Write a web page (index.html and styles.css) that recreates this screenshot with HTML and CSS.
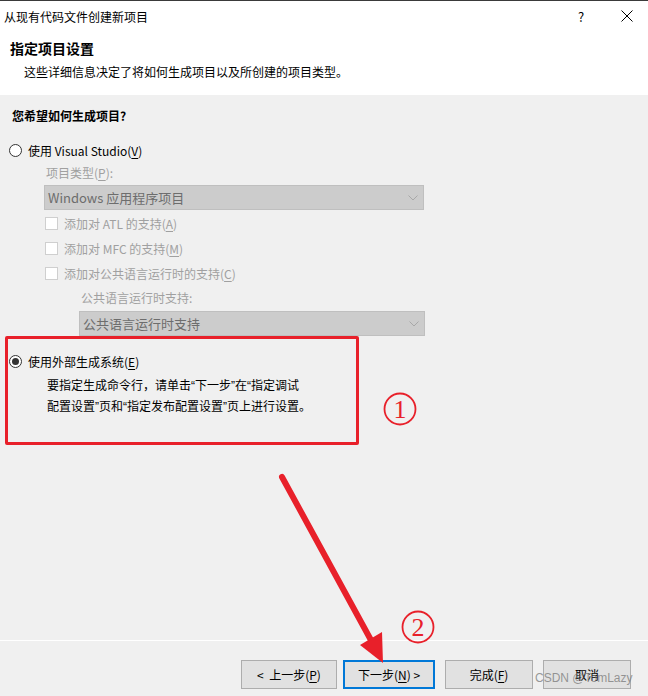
FILE: index.html
```html
<!DOCTYPE html>
<html lang="zh-CN">
<head>
  <meta charset="UTF-8">
  <title>从现有代码文件创建新项目</title>
  <link rel="stylesheet" href="styles.css">
</head>
<body>
  <div class="dialog">
    <div class="titlebar">
      <div class="title">从现有代码文件创建新项目</div>
      <div class="title-btn help">?</div>
      <div class="title-btn close">
        <svg width="12" height="12" viewBox="0 0 12 12"><path d="M0.5 0.5 L11.5 11.5 M11.5 0.5 L0.5 11.5" stroke="#000" stroke-width="1"/></svg>
      </div>
    </div>

    <div class="header">
      <div class="heading">指定项目设置</div>
      <div class="subtitle">这些详细信息决定了将如何生成项目以及所创建的项目类型。</div>
    </div>

    <div class="content">
      <div class="question">您希望如何生成项目?</div>

      <div class="radio-row">
        <span class="radio"></span>
        <span>使用 Visual Studio(<u>V</u>)</span>
      </div>
      <div class="vs-options">
        <div class="field-label">项目类型(<u>P</u>):</div>
        <div class="combo">
          <span>Windows 应用程序项目</span>
          <svg width="10" height="6" viewBox="0 0 10 6"><path d="M0.5 0.5 L5 5 L9.5 0.5" fill="none" stroke="#a8a8a8"/></svg>
        </div>
        <div class="check-row first"><span class="check"></span><span>添加对 ATL 的支持(<u>A</u>)</span></div>
        <div class="check-row"><span class="check"></span><span>添加对 MFC 的支持(<u>M</u>)</span></div>
        <div class="check-row"><span class="check"></span><span>添加对公共语言运行时的支持(<u>C</u>)</span></div>
        <div class="clr">
          <div class="field-label">公共语言运行时支持:</div>
          <div class="combo">
            <span>公共语言运行时支持</span>
            <svg width="10" height="6" viewBox="0 0 10 6"><path d="M0.5 0.5 L5 5 L9.5 0.5" fill="none" stroke="#a8a8a8"/></svg>
          </div>
        </div>
      </div>

      <div class="external">
        <div class="radio-row">
          <span class="radio checked"></span>
          <span>使用外部生成系统(<u>E</u>)</span>
        </div>
        <div class="desc">要指定生成命令行，请单击“下一步”在“指定调试</div>
        <div class="desc">配置设置”页和“指定发布配置设置”页上进行设置。</div>
      </div>
    </div>

    <div class="footer">
      <button class="btn">&lt;&nbsp; 上一步(<u>P</u>)</button>
      <button class="btn default">下一步(<u>N</u>) &gt;</button>
      <button class="btn">完成(<u>F</u>)</button>
      <button class="btn">取消</button>
    </div>

    <!-- annotations drawn over the screenshot -->
    <svg class="mark mark-1" width="36" height="36" viewBox="0 0 36 36">
      <circle cx="18" cy="18" r="15.5" fill="none" stroke="#e8202a" stroke-width="1.8"/>
      <text x="18" y="27" text-anchor="middle" class="mark-num">1</text>
    </svg>
    <svg class="mark mark-2" width="36" height="36" viewBox="0 0 36 36">
      <circle cx="18" cy="18" r="15.5" fill="none" stroke="#e8202a" stroke-width="1.8"/>
      <text x="18" y="27" text-anchor="middle" class="mark-num">2</text>
    </svg>
    <svg class="arrow" width="648" height="696" viewBox="0 0 648 696">
      <line x1="282" y1="477" x2="372" y2="642" stroke="#e8202a" stroke-width="6" stroke-linecap="round"/>
      <polygon points="383,663 360,645 382,632" fill="#e8202a"/>
    </svg>
    <div class="watermark">CSDN @TomLazy</div>
  </div>
</body>
</html>
```

FILE: styles.css
```css
html,
body {
  margin: 0;
  width: 100%;
  height: 100%;
}

body {
  font-family: "Noto Sans CJK SC", "Noto Sans", sans-serif;
  font-size: 12px;
  color: #000;
  background-color: #f0f0f0;
}

u {
  text-decoration-thickness: 1px;
  text-underline-offset: 2px;
}

.dialog {
  width: 648px;
  height: 696px;
  position: relative;
  overflow: hidden;
  display: flex;
  flex-direction: column;
}

.titlebar {
  height: 30px;
  background-color: #fff;
  border-top: 1px solid #3a3a3a;
  display: flex;
  align-items: center;
}

.title {
  flex: 1;
  padding-left: 4px;
}

.title-btn {
  width: 46px;
  display: flex;
  justify-content: center;
  align-items: center;
}

.help {
  font-size: 13px;
}

.close {
  margin-right: -2px;
}

.header {
  height: 64px;
  background-color: #fff;
}

.heading {
  font-size: 14px;
  font-weight: bold;
  padding: 6px 0 0 10px;
  line-height: 22px;
}

.subtitle {
  padding: 4px 0 0 24px;
  line-height: 18px;
}

.content {
  flex: 1;
  padding-top: 11px;
}

.question {
  font-weight: bold;
  padding-left: 12px;
  line-height: 20px;
}

.radio-row {
  display: flex;
  align-items: center;
  height: 20px;
  margin-top: 14px;
  padding-left: 9px;
  gap: 6px;
}

.radio {
  width: 11px;
  height: 11px;
  border: 1px solid #333;
  border-radius: 50%;
  background-color: #fff;
  position: relative;
}

.radio.checked::after {
  content: '';
  position: absolute;
  left: 2px;
  top: 2px;
  width: 7px;
  height: 7px;
  border-radius: 50%;
  background-color: #333;
}

.vs-options {
  padding-left: 44px;
  color: #a0a0a0;
}

.field-label {
  line-height: 20px;
  margin-top: 3px;
  padding-left: 2px;
}

.combo {
  width: 370px;
  height: 23px;
  margin-top: 2px;
  background-color: #cccccc;
  border: 1px solid #bfbfbf;
  display: flex;
  align-items: center;
  justify-content: space-between;
  padding: 0 5px 0 3px;
  color: #6d6d6d;
  font-size: 13px;
}

.check-row {
  display: flex;
  align-items: center;
  height: 20px;
  margin-top: 5px;
  padding-left: 1px;
  gap: 6px;
}

.check-row.first {
  margin-top: 3px;
}

.check {
  width: 11px;
  height: 11px;
  background-color: #fff;
  border: 1px solid #cfcfcf;
}

.clr {
  padding-left: 35px;
  margin-top: 5px;
}

.clr .combo {
  width: 336px;
  margin-top: 3px;
}

.external {
  width: 348px;
  height: 103px;
  margin: 0 0 0 5px;
  border: 3px solid #e8202a;
  border-radius: 2px;
}

.external .radio-row {
  margin-top: 12px;
  padding-left: 1px;
}

.desc {
  padding-left: 39px;
  line-height: 21px;
  font-family: "Liberation Sans", "Noto Sans CJK SC", sans-serif;
}

.external .radio-row + .desc {
  margin-top: 5px;
}

.footer {
  height: 56px;
  box-sizing: border-box;
  border-top: 1px solid #fff;
  display: flex;
  align-items: flex-start;
  padding: 19px 0 0 241px;
  gap: 7px;
}

.btn {
  width: 96px;
  height: 29px;
  margin: 0;
  background-color: #e1e1e1;
  border: 1px solid #adadad;
  font-family: inherit;
  font-size: 12px;
  color: #000;
  padding: 0;
}

.btn.default {
  width: 92px;
  border: 2px solid #0078d7;
  margin-left: -1px;
  margin-right: 3px;
}

.btn:nth-child(3),
.btn:nth-child(4) {
  width: 88px;
  margin-right: 3px;
}

.mark {
  position: absolute;
}

.mark-1 {
  left: 382px;
  top: 391px;
}

.mark-2 {
  left: 400px;
  top: 609px;
}

.mark-num {
  font-family: "Liberation Serif", serif;
  font-size: 26px;
  fill: #e8202a;
}

.arrow {
  position: absolute;
  left: 0;
  top: 0;
  pointer-events: none;
}

.watermark {
  position: absolute;
  left: 535px;
  top: 671px;
  white-space: nowrap;
  font-family: "Liberation Sans", sans-serif;
  font-size: 12px;
  color: rgba(120, 120, 120, 0.75);
}
```
